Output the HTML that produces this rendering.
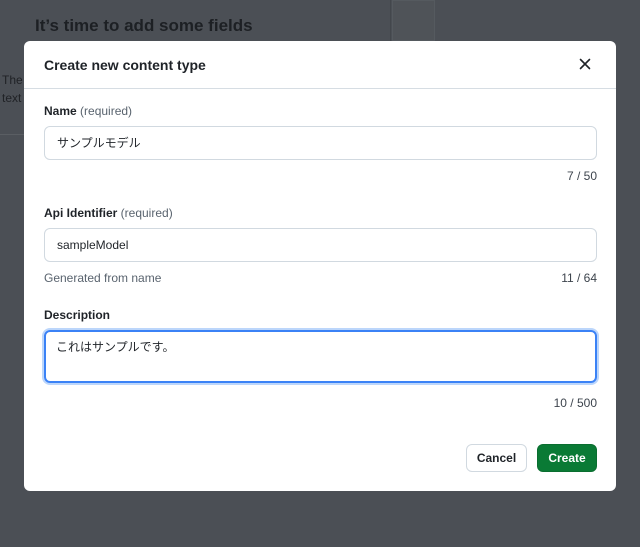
<!DOCTYPE html>
<html><head><meta charset="utf-8"><style>
*{box-sizing:border-box;margin:0;padding:0}
body{width:640px;height:547px;overflow:hidden;background:#4b4f55;font-family:"Liberation Sans","Noto Sans CJK JP",sans-serif;position:relative;color:#1f2328}
.bg{position:absolute;color:#1d2024}
.m{position:absolute;left:24px;top:41px;width:592px;height:450px;background:#fff;border-radius:6px}
.hd{height:48px;border-bottom:1px solid #d6dde3;position:relative}
.hd h1{position:absolute;left:20px;top:16px;font-size:14px;font-weight:bold}
.x{position:absolute;left:554px;top:16px;width:14px;height:14px}
.lbl{position:absolute;left:20px;font-size:12px;font-weight:bold}
.lbl span{font-weight:normal;color:#59636e}
.in{position:absolute;left:20px;width:553px;height:34px;border:1px solid #d1d9e0;border-radius:6px;font-size:12px;padding:0 12px;line-height:32px}
.cnt{position:absolute;right:19px;font-size:12px;color:#3d444d}
.hint{position:absolute;left:20px;font-size:12px;color:#59636e}
.ta{position:absolute;left:20px;top:289px;width:553px;height:53px;border:2px solid #3b82f6;box-shadow:0 0 0 2px #bcd6fb;border-radius:6px;font-size:12px;padding:6px 10px}
.btn{position:absolute;top:403px;height:28px;border-radius:6px;font-size:12px;font-weight:bold;line-height:26px;text-align:center}
</style></head><body>
<div class="bg" style="left:35px;top:16px;font-size:17px;font-weight:bold">It’s time to add some fields</div>
<div class="bg" style="left:2px;top:71px;font-size:12px;line-height:18px;color:#202226">The<br>text</div>
<div style="position:absolute;left:0;top:134px;width:24px;height:1px;background:#5a5e63"></div>
<div style="position:absolute;left:390px;top:0;width:1px;height:41px;background:#43474c"></div>
<div style="position:absolute;left:392px;top:0;width:43px;height:41px;background:#4f5358;border:1px solid #555a5f"></div>
<div class="m">
<div class="hd"><h1>Create new content type</h1>
<svg class="x" viewBox="0 0 14 14"><path d="M2.5 2.5L11.5 11.5M11.5 2.5L2.5 11.5" stroke="#1f2328" stroke-width="1.6" stroke-linecap="round"/></svg></div>
<div class="lbl" style="top:63px">Name <span>(required)</span></div>
<div class="in" style="top:85px">サンプルモデル</div>
<div class="cnt" style="top:128px">7 / 50</div>
<div class="lbl" style="top:165px">Api Identifier <span>(required)</span></div>
<div class="in" style="top:187px">sampleModel</div>
<div class="hint" style="top:230px">Generated from name</div>
<div class="cnt" style="top:230px">11 / 64</div>
<div class="lbl" style="top:267px">Description</div>
<div class="ta">これはサンプルです。</div>
<div class="cnt" style="top:355px">10 / 500</div>
<div class="btn" style="left:442px;width:61px;border:1px solid #d1d9e0;background:#fff">Cancel</div>
<div class="btn" style="left:513px;width:60px;background:#0a7a35;color:#fff;border:1px solid #0a6e30">Create</div>
</div>
</body></html>
